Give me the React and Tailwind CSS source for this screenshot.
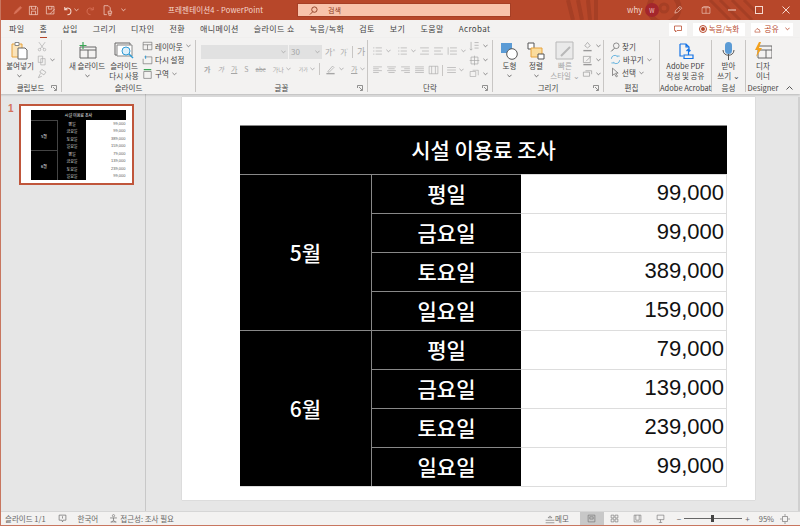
import React from "react";

const S = ({ w = 14, h = 14, vb = "0 0 16 16", className = "", children }) => (
  <svg width={w} height={h} viewBox={vb} fill="none" stroke="currentColor" strokeWidth="1" className={"shrink-0 " + className}>{children}</svg>
);
const Chev = ({ className = "text-[#666]" }) => (
  <svg width="5" height="4" viewBox="0 0 6 4" fill="none" stroke="currentColor" strokeWidth="1" className={"shrink-0 " + className}><path d="M.5.5 3 3 5.5.5" /></svg>
);

const tabs = ["파일", "홈", "삽입", "그리기", "디자인", "전환", "애니메이션", "슬라이드 쇼", "녹음/녹화", "검토", "보기", "도움말", "Acrobat"];

const TitleBar = () => (
  <div className="relative h-[20px] bg-[#b7472a] flex items-center text-[#f6d9cf] shrink-0 overflow-hidden">
    <svg className="absolute left-[560px] top-0" width="240" height="20" viewBox="0 0 240 20" fill="none" stroke="#a63f25">
      <path d="M8 0l5 20M18 0l4 20M28 0l2 20M36 0v20" strokeWidth="4" />
      <circle cx="104" cy="8" r="15" strokeWidth="5" />
      <circle cx="104" cy="8" r="4" strokeWidth="3" />
      <path d="M150 0l20 20M160 0l20 20M172 0l20 20M184 0l14 14" strokeWidth="3" />
    </svg>
    <div className="relative flex items-center w-[297px] pl-[12px]">
      <S w={11} h={11} className="text-[#d9735a] mr-[5px]"><path d="M3 13l2-4 7-7 2 2-7 7z" fill="#d9735a" /></S>
      <S w={11} h={11} className="mr-[6px]"><path d="M2 2h10l2 2v10H2zM5 2v4h6V2M5 14v-5h6v5" /></S>
      <S w={11} h={11} className="mr-[6px]"><path d="M2 2h11v11H2zM5 2v4h5V2M7 13l7-7" /></S>
      <S w={11} h={11} className="mr-[1px]"><path d="M4 3v4h4M4 7c3-4 9-3 9 2 0 3-2 5-5 5" strokeWidth="1.5" /></S>
      <Chev className="text-[#f6d9cf] mr-[6px]" />
      <S w={11} h={11} className="text-[#d9735a] mr-[6px]"><path d="M12 3v4H8M12 7C9 3 3 4 3 9c0 3 2 5 5 5" strokeWidth="1.3" /></S>
      <S w={11} h={11} className="mr-[8px]"><path d="M3 1h6l3 3v5M3 1v13h4M9 9h5v3H9zM10 12v3h3v-3" /></S>
      <Chev className="text-[#f6d9cf]" />
      <span className="ml-[42px] text-[7.5px] whitespace-nowrap tracking-[0.15px]">프레젠테이션4 - PowerPoint</span>
    </div>
    <div className="relative w-[214px] h-[14px] bg-[#f8c3ab] border border-[#a63f25] flex items-center pl-[11px] text-[#8b3a20]">
      <svg width="9" height="9" viewBox="0 0 10 10" fill="none" stroke="currentColor"><circle cx="6" cy="4" r="3" /><path d="M4 6.5 1 9.5" /></svg>
      <span className="ml-[10px] text-[7px]">검색</span>
    </div>
    <div className="relative ml-[116px] text-[8px] w-[18px] text-[#f3d5cc]">why</div>
    <div className="relative w-[14px] h-[14px] rounded-full bg-[#a4262c] flex items-center justify-center text-[6px] text-[#f3c7c7]">W</div>
    <S w={10} h={10} className="relative ml-[14px]"><path d="M3 13l1-4 7-7 3 3-7 7zM9 4l3 3" /></S>
    <S w={10} h={9} className="relative ml-[18px]"><path d="M1 3h14v10H1zM8 3v10M1 3l3-2h8l3 2" /></S>
    <svg className="relative ml-[17px]" width="8" height="2"><path d="M0 1h8" stroke="currentColor" /></svg>
    <svg className="relative ml-[19px]" width="8" height="8"><rect x=".5" y=".5" width="7" height="7" stroke="currentColor" fill="none" /></svg>
    <svg className="relative ml-[19px]" width="8" height="8"><path d="M.5.5l7 7M7.5.5l-7 7" stroke="currentColor" /></svg>
  </div>
);

const TabRow = () => (
  <div className="h-[18px] bg-[#f3f2f1] flex items-center shrink-0 text-[#444] text-[8px] tracking-[0.4px]">
    <div className="flex gap-[15px] pl-[9px]">
      {tabs.map((t) => (
        <div key={t} className="relative whitespace-nowrap">
          {t}
          {t === "홈" && <div className="absolute left-0 right-0 -bottom-[3px] h-[1.5px] bg-[#b7472a]" />}
        </div>
      ))}
    </div>
    <div className="ml-auto flex items-center pr-[7px] tracking-normal">
      <div className="w-[18px] h-[13px] bg-white flex items-center justify-center mr-[6px] text-[#b7472a]">
        <S w={8} h={8}><path d="M1 2h14v9H6l-3 3v-3H1z" strokeWidth="1.5" /></S>
      </div>
      <div className="w-[52px] h-[13px] bg-white flex items-center justify-center gap-[2px] mr-[6px] text-[#b7472a] text-[7.5px]">
        <svg width="8" height="8" viewBox="0 0 8 8"><circle cx="4" cy="4" r="3.5" fill="none" stroke="currentColor" /><circle cx="4" cy="4" r="2" fill="currentColor" /></svg>
        <span>녹음/녹화</span>
      </div>
      <div className="w-[42px] h-[13px] bg-white flex items-center justify-center gap-[3px] text-[#b7472a] text-[8px]">
        <S w={7} h={7}><path d="M2 14h12L12 8H9l-1-3-5 5z" strokeWidth="1.4" /></S>
        <span>공유</span>
        <Chev className="text-[#b7472a] ml-[3px]" />
      </div>
    </div>
  </div>
);

const Group = ({ w, label, launcher, children }) => (
  <div className={"flex flex-col shrink-0 border-r border-[#c8c6c4] my-[2px] " + w}>
    <div className="flex-1 flex min-h-0">{children}</div>
    <div className="relative h-[12px] text-[7.5px] leading-[15px] text-center text-[#444] whitespace-nowrap">
      {label}
      {launcher && (
        <svg className="absolute right-[4px] top-[5px] text-[#777]" width="6" height="6" viewBox="0 0 6 6" fill="none" stroke="currentColor" strokeWidth=".8"><path d="M.5 3V.5H5.5V5.5H3M2 2l3 3" /></svg>
      )}
    </div>
  </div>
);

const Big = ({ icon, lines, chev, w = "", gray }) => (
  <div className={"flex flex-col items-center text-[7.5px] leading-[9.5px] text-center " + w + (gray ? " text-[#a6a6a6]" : " text-[#444]")}>
    <div className="h-[21px] flex items-center justify-center">{icon}</div>
    {lines.map((l) => <div key={l} className="whitespace-nowrap">{l}</div>)}
    {chev && <Chev className="mt-[3px] text-[#555]" />}
  </div>
);

const Small = ({ icon, label, chev, gray, cls = "" }) => (
  <div className={"flex items-center h-[13px] gap-[2px] text-[7.5px] whitespace-nowrap " + cls + (gray ? " text-[#a6a6a6]" : " text-[#444]")}>
    {icon}
    {label && <span>{label}</span>}
    {chev && <Chev className="ml-[1px] text-[#777]" />}
  </div>
);

const listIcon = (
  <S w={11} h={10}><path d="M1 3h2M1 8h2M1 13h2M5 3h10M5 8h10M5 13h10" /></S>
);
const alignIcon = (d) => (
  <S w={11} h={10} className="text-[#a6a6a6]"><path d={d} /></S>
);

const Ribbon = () => (
  <div className="h-[56px] bg-[#f3f2f1] flex shrink-0 shadow-[0_1px_2px_rgba(0,0,0,0.2)] relative z-10">
    <Group w="w-[62px]" label="클립보드" launcher>
      <div className="w-[40px] flex justify-center">
        <Big lines={["붙여넣기"]} chev icon={
          <svg width="17" height="19" viewBox="0 0 17 19" fill="none">
            <path d="M1 3h10v13H1z" fill="#fbe3b8" stroke="#e8a33d" />
            <path d="M4 1.5h4v3H4z" fill="#fff" stroke="#888" />
            <path d="M7 7h7l2 2v9H7z" fill="#fff" stroke="#666" />
          </svg>} />
      </div>
      <div className="flex flex-col gap-[1px] -ml-[3px] text-[#a6a6a6]">
        <Small gray icon={<S w={10} h={11}><path d="M3 1l8 11M13 1L5 12" /><circle cx="4" cy="13" r="2" /><circle cx="12" cy="13" r="2" /></S>} />
        <Small gray chev icon={<S w={10} h={11}><path d="M2 1h7v10H2zM6 5h7v10H6z" /></S>} />
        <Small gray icon={<S w={11} h={11}><path d="M7 2l6 4-3 4-6-4zM5 8l-3 6 5-2" /></S>} />
      </div>
    </Group>

    <Group w="w-[134px]" label="슬라이드">
      <div className="w-[44px] flex justify-center ml-[3px]">
        <Big lines={["새 슬라이드"]} chev icon={
          <svg width="19" height="17" viewBox="0 0 19 17" fill="none">
            <path d="M2 5h16v11H2zM2 8h16M10 8v8" stroke="#666" />
            <path d="M5 0v7M1.5 3.5h7" stroke="#3aa655" strokeWidth="1.2" />
          </svg>} />
      </div>
      <div className="w-[30px] flex justify-center">
        <Big lines={["슬라이드", "다시 사용"]} icon={
          <svg width="20" height="19" viewBox="0 0 20 19" fill="none">
            <path d="M1 2h15v12H1z" stroke="#666" /><path d="M3 4h15v11H3z" stroke="#888" fill="#fff" />
            <circle cx="12" cy="10" r="4" stroke="#2e9bd6" fill="#dff0fa" /><path d="M15 13l4 4" stroke="#2e9bd6" strokeWidth="1.4" />
          </svg>} />
      </div>
      <div className="flex flex-col pl-[3px] gap-[1px]">
        <Small label="레이아웃" chev icon={<S w={11} h={10} className="text-[#666]"><path d="M1 2h14v12H1zM1 6h14M8 6v8" /></S>} />
        <Small label="다시 설정" icon={<S w={11} h={10} className="text-[#666]"><path d="M3 3h12v11H1V6" /><path d="M5 1v5" stroke="#2e9bd6" strokeWidth="1.6" /></S>} />
        <Small label="구역" chev icon={<S w={11} h={10} className="text-[#666]"><path d="M2 1h12" stroke="#3aa655" strokeWidth="2" /><path d="M2 4h12v11H2z" /></S>} />
      </div>
    </Group>

    <Group w="w-[172px]" label="글꼴" launcher>
      <div className="flex flex-col pl-[5px] pt-[5px] text-[#a6a6a6]">
        <div className="flex items-center h-[14px]">
          <div className="w-[88px] h-[14px] bg-[#e1e1e1] flex items-center justify-end pr-[1px] border-r border-[#f3f2f1]">
            <Chev className="text-[#a6a6a6] mr-[1px]" />
          </div>
          <div className="w-[33px] h-[14px] bg-[#e1e1e1] flex items-center justify-between pl-[2px] pr-[2px] text-[8px]">30<Chev className="text-[#a6a6a6]" /></div>
          <span className="ml-[3px] text-[8px]">가</span><span className="text-[5px] -mt-[3px]">^</span>
          <span className="ml-[5px] text-[7px]">가</span><span className="text-[5px] -mt-[3px]">˅</span>
          <div className="w-px h-[12px] bg-[#c8c6c4] mx-[4px]" />
          <span className="text-[9px]">가</span>
        </div>
        <div className="flex items-center h-[14px] mt-[3px] pl-[3px] text-[7px] gap-[7px]">
          <span className="font-bold">가</span><span className="italic">가</span><span className="underline">가</span><span>S</span><span className="line-through text-[6px]">abc</span>
          <span className="text-[6px]">가나</span><Chev className="text-[#a6a6a6] -ml-[5px]" />
          <span className="text-[5px] ml-[1px]">가가</span><Chev className="text-[#a6a6a6] -ml-[5px]" />
          <div className="w-px h-[12px] bg-[#c8c6c4] -ml-[3px]" />
          <S w={11} h={11} className="-ml-[2px]"><path d="M2 14h12" strokeWidth="2" /><path d="M4 11l7-8 2 2-7 7z" /></S>
          <Chev className="text-[#a6a6a6] -ml-[4px]" />
          <span className="underline">가</span><Chev className="text-[#a6a6a6] -ml-[4px]" />
        </div>
      </div>
    </Group>

    <Group w="w-[125px]" label="단락" launcher>
      <div className="flex flex-col pl-[4px] pt-[5px] text-[#a6a6a6] w-[101px] shrink-0">
        <div className="flex items-center h-[12px] gap-[3px]">
          {listIcon}<Chev className="text-[#a6a6a6]" />
          <span className="w-0" />{listIcon}<Chev className="text-[#a6a6a6]" />
          {alignIcon("M1 3h14M4 8h11M1 13h14")}
          {alignIcon("M1 3h14M1 8h11M1 13h14")}
          {alignIcon("M4 3h11M4 8h11M4 13h11M1 2v12")}<Chev className="text-[#a6a6a6]" />
        </div>
        <div className="flex items-center h-[12px] gap-[3px] mt-[7px]">
          {alignIcon("M1 3h14M1 6h9M1 9h14M1 12h9")}
          {alignIcon("M1 3h14M3 6h10M1 9h14M3 12h10")}
          {alignIcon("M1 3h14M6 6h9M1 9h14M6 12h9")}
          {alignIcon("M1 3h14M1 6h14M1 9h14M1 12h14")}
          {alignIcon("M1 2h14v12H1zM5 2v12M11 2v12")}
          <div className="w-px h-[11px] bg-[#c8c6c4]" />
          {alignIcon("M1 4h14M1 8h14M1 12h14")}<Chev className="text-[#a6a6a6] -ml-[1px]" />
        </div>
      </div>
      <div className="flex flex-col gap-[1px] text-[#a6a6a6]">
        <Small gray chev icon={<S w={11} h={12}><path d="M3 2v12M1 12l2 2 2-2M8 3h6M8 7h6M8 11h6" /></S>} />
        <Small gray chev icon={<S w={11} h={11}><path d="M3 3h10v10H3zM8 1v14M1 8h14" /></S>} />
        <Small gray chev icon={<S w={11} h={10}><path d="M1 4h9v8H1zM5 2h9v8" /></S>} />
      </div>
    </Group>

    <Group w="w-[111px]" label="그리기" launcher>
      <div className="w-[31px] flex justify-center pl-[2px]">
        <Big lines={["도형"]} chev icon={
          <svg width="17" height="18" viewBox="0 0 17 18" fill="none">
            <path d="M0 1h11v10H0z" fill="#5b9bd5" />
            <circle cx="11" cy="12" r="5.3" fill="#fff" stroke="#555" />
          </svg>} />
      </div>
      <div className="w-[24px] flex justify-center">
        <Big lines={["정렬"]} chev icon={
          <svg width="18" height="18" viewBox="0 0 18 18" fill="none">
            <path d="M1 1h6v6H1z" fill="#fff" stroke="#555" />
            <path d="M4 6h11v9H4z" fill="#fbdc9c" stroke="#e8a33d" />
            <path d="M11 12h6v5h-6z" fill="#fff" stroke="#555" />
          </svg>} />
      </div>
      <div className="w-[34px] flex justify-center">
        <Big gray lines={["빠른", "스타일 ⌄"]} icon={
          <svg width="19" height="19" viewBox="0 0 19 19" fill="none" stroke="#b8b8b8">
            <path d="M1 1h17v17H1z" fill="#eaeaea" /><path d="M6 15 15 6" strokeWidth="2" />
          </svg>} />
      </div>
      <div className="flex flex-col gap-[1px]">
        <Small gray chev icon={<S w={11} h={11} className="text-[#999]"><path d="M2 14h12" strokeWidth="2" /><path d="M8 2l4 5-4 3-4-3z" /></S>} />
        <Small gray chev icon={<S w={11} h={11} className="text-[#999]"><path d="M2 14h12" strokeWidth="2" /><path d="M2 2h10v9H2zM6 9l7-7" /></S>} />
        <Small gray chev icon={<S w={11} h={11} className="text-[#999]"><path d="M2 6h9v6H2zM5 4h9v5" /></S>} />
      </div>
    </Group>

    <Group w="w-[56px]" label="편집">
      <div className="flex flex-col pl-[6px]">
        <Small label="찾기" icon={<S w={10} h={10} className="text-[#555]"><circle cx="10" cy="6" r="4.5" /><path d="M7 10l-5 5" strokeWidth="1.4" /></S>} />
        <Small label="바꾸기" chev icon={<S w={11} h={11} className="text-[#2e9bd6]"><path d="M2 7a5 5 0 0 1 9-3M14 9a5 5 0 0 1-9 3M2 13h4M10 3h4" /></S>} />
        <Small label="선택" chev icon={<S w={10} h={11} className="text-[#555]"><path d="M4 1v12l3-3 3 5 2-1-3-5h4z" /></S>} />
      </div>
    </Group>

    <Group w="w-[52px]" label="Adobe Acrobat">
      <div className="w-full flex justify-center">
        <Big lines={["Adobe PDF", "작성 및 공유"]} icon={
          <svg width="16" height="16" viewBox="0 0 16 16" fill="none" stroke="#1473e6" strokeWidth="1.2">
            <path d="M2 1h6l3 3v5M2 1v12h3M8 1v3h3M6 12h9v3.5H6zM10.5 12V6M8.5 8l2-2 2 2" />
          </svg>} />
      </div>
    </Group>

    <Group w="w-[34px]" label="음성">
      <div className="w-full flex justify-center">
        <Big lines={["받아", "쓰기 ⌄"]} icon={
          <svg width="13" height="18" viewBox="0 0 13 18" fill="none">
            <rect x="3" y="0" width="7" height="12" rx="3.5" fill="#5b9bd5" />
            <path d="M1 8c0 7 11 7 11 0M6.5 12v6" stroke="#555" />
          </svg>} />
      </div>
    </Group>

    <div className="flex flex-col w-[34px] my-[2px] shrink-0">
      <div className="flex-1 min-h-0 flex justify-center">
        <Big lines={["디자", "이너"]} icon={
          <svg width="18" height="18" viewBox="0 0 18 18" fill="none">
            <path d="M4 4h14v12H4zM4 8h14M12 8v8" stroke="#666" />
            <path d="M5 0 1 8h3l-2 7 6-9H5l2-6z" fill="#f4a11d" />
          </svg>} />
      </div>
      <div className="h-[12px] text-[7.5px] leading-[15px] text-center text-[#444]">Designer</div>
    </div>
    <div className="flex-1 flex items-end justify-center pb-[4px] pr-[2px]">
      <svg width="7" height="4" viewBox="0 0 7 4" fill="none" stroke="#555"><path d="M.5 3.5 3.5.5l3 3" /></svg>
    </div>
  </div>
);

const rows = [
  ["5월", [["평일", "99,000"], ["금요일", "99,000"], ["토요일", "389,000"], ["일요일", "159,000"]]],
  ["6월", [["평일", "79,000"], ["금요일", "139,000"], ["토요일", "239,000"], ["일요일", "99,000"]]],
];

const BigTable = () => (
  <div className="w-[487px] flex flex-col">
    <div className="h-[49px] bg-black text-white text-[21px] font-medium flex items-center justify-center border-t border-[#888]">시설 이용료 조사</div>
    {rows.map(([m, ds]) => (
      <div key={m} className="flex">
        <div className="w-[132px] bg-black text-white text-[21px] font-medium flex items-center justify-center border-t border-r border-[#888] pt-[1px]">{m}</div>
        <div className="flex-1 flex flex-col">
          {ds.map(([d, v]) => (
            <div key={d} className="h-[39px] flex">
              <div className="w-[149px] bg-black text-white text-[21px] font-medium flex items-center justify-center border-t border-[#888]">{d}</div>
              <div className="flex-1 bg-white border-t border-r border-[#ddd] text-[#111] text-[22px] font-['Liberation_Sans',sans-serif] flex items-center justify-end pr-[2px] pb-[3px]">{v}</div>
            </div>
          ))}
        </div>
      </div>
    ))}
    <div className="h-px bg-[#ddd]" />
  </div>
);

const MiniTable = () => (
  <div className="w-[95px] flex flex-col leading-none">
    <div className="h-[10px] bg-black text-white text-[4px] flex items-center justify-center">시설 이용료 조사</div>
    {rows.map(([m, ds]) => (
      <div key={m} className="flex">
        <div className="w-[26px] bg-black text-white text-[4px] flex items-center justify-center border-t border-[#444]">{m}</div>
        <div className="flex-1 flex flex-col">
          {ds.map(([d, v]) => (
            <div key={d} className="h-[7.5px] flex">
              <div className="w-[29px] bg-black text-[#ddd] text-[4px] flex items-center justify-center border-l border-[#444]">{d}</div>
              <div className="flex-1 bg-white text-[#555] text-[4px] flex items-center justify-end pr-[0.5px] font-['Liberation_Sans',sans-serif]">{v}</div>
            </div>
          ))}
        </div>
      </div>
    ))}
  </div>
);

const Body = () => (
  <div className="flex-1 flex min-h-0 bg-[#e6e6e6]">
    <div className="w-[146px] shrink-0 border-r border-[#c8c8c8] flex items-start pt-[10px] pl-[8px]">
      <span className="text-[10px] leading-[10px] text-[#d4705a] font-bold font-['Liberation_Sans',sans-serif] w-[11px]">1</span>
      <div className="w-[115px] h-[81px] border-2 border-[#c0563b] bg-white flex justify-center pt-[4px] pl-[4px]">
        <MiniTable />
      </div>
    </div>
    <div className="flex-1 pl-[36px] pt-[3px] flex">
      <div className="w-[573px] h-[403px] bg-white shadow-[0_0_1px_rgba(0,0,0,0.25)] pl-[58px] pt-[28px]">
        <BigTable />
      </div>
      <div className="ml-auto w-[2px] bg-[#d0d0d0]" />
    </div>
  </div>
);

const Status = () => (
  <div className="h-[15px] bg-[#f3f2f1] border-t border-[#d6d6d6] border-b border-b-[#c8765f] shrink-0 flex items-center text-[7.5px] text-[#666]">
    <span className="ml-[5px]">슬라이드 1/1</span>
    <S w={9} h={9} className="ml-[12px]"><path d="M2 2h12v9H9l-1 3-1-3H2zM8 4v4" strokeWidth="1.2" /></S>
    <span className="ml-[11px]">한국어</span>
    <S w={9} h={9} className="ml-[11px]"><circle cx="8" cy="3" r="2" /><path d="M2 7h12M8 7v4l-4 4M8 11l4 4M3 14h10" strokeWidth="1.2" /></S>
    <span className="ml-[2px]">접근성: 조사 필요</span>
    <div className="ml-auto flex items-center h-full">
      <S w={10} h={10}><path d="M8 3l3 3H5zM1 10h14M1 14h14" /></S>
      <span className="mr-[11px]">메모</span>
      <div className="w-[24px] h-full bg-[#c8c8c8] flex items-center justify-center"><S w={9} h={9}><path d="M2 2h12v12H2zM5 5h6v4H5z" /></S></div>
      <div className="w-[22px] flex justify-center"><S w={9} h={9}><path d="M2 2h5v5H2zM9 2h5v5H9zM2 9h5v5H2zM9 9h5v5H9z" /></S></div>
      <div className="w-[24px] flex justify-center"><S w={9} h={9}><path d="M2 2h12v12H2zM5 2v9h6V2" /></S></div>
      <div className="w-[22px] flex justify-center"><S w={9} h={9}><path d="M2 2h12v8H2zM8 10v5M5 15h6" /></S></div>
      <span className="ml-[5px] text-[8px] leading-none">−</span>
      <div className="relative w-[58px] h-px bg-[#666] mx-[3px]">
        <div className="absolute left-[27px] -top-[3px] w-[3px] h-[7px] bg-[#444]" />
      </div>
      <span className="text-[8px] leading-none">+</span>
      <span className="ml-[9px]">95%</span>
      <S w={10} h={10} className="ml-[6px]"><path d="M4 4h8v8H4zM8 0v3M8 13v3M0 8h3M13 8h3" /></S>
      <span className="w-[10px]" />
    </div>
  </div>
);

export default function App() {
  return (
    <div className="relative w-[800px] h-[526px] flex flex-col overflow-hidden font-['Noto_Sans_CJK_KR','Noto_Sans',sans-serif]">
      <TitleBar />
      <TabRow />
      <Ribbon />
      <Body />
      <Status />
      <div className="absolute left-0 top-0 bottom-0 w-px bg-[#c8765f] z-20" />
    </div>
  );
}
